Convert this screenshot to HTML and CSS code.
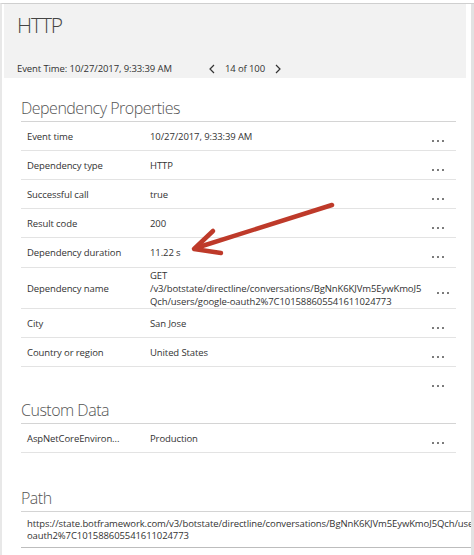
FILE: index.html
```html
<!DOCTYPE html>
<html lang="en">
<head>
    <meta charset="UTF-8">
    <meta name="viewport" content="width=device-width, initial-scale=1.0">
    <title>HTTP - Dependency</title>
    <link rel="stylesheet" href="styles.css">
</head>
<body>
    <div class="panel">
        <header class="blade-head">
            <h1>HTTP</h1>
            <div class="event-bar">
                <span>Event Time: 10/27/2017, 9:33:39 AM</span>
                <span class="pager">
                    <svg width="6" height="10" viewBox="0 0 6 10"><path d="M5 1 L1 5 L5 9" fill="none" stroke="#333" stroke-width="1.2"/></svg>
                    <span class="count">14 of 100</span>
                    <svg width="6" height="10" viewBox="0 0 6 10"><path d="M1 1 L5 5 L1 9" fill="none" stroke="#333" stroke-width="1.2"/></svg>
                </span>
            </div>
        </header>

        <div class="content">
            <section class="props">
                <h2>Dependency Properties</h2>
                <div class="table">
                    <div class="row"><div class="key">Event time</div><div class="val">10/27/2017, 9:33:39 AM</div><div class="more"><svg width="14" height="4" viewBox="0 0 14 4"><circle cx="2" cy="2" r="0.95"/><circle cx="7" cy="2" r="0.95"/><circle cx="12" cy="2" r="0.95"/></svg></div></div>
                    <div class="row"><div class="key">Dependency type</div><div class="val">HTTP</div><div class="more"><svg width="14" height="4" viewBox="0 0 14 4"><circle cx="2" cy="2" r="0.95"/><circle cx="7" cy="2" r="0.95"/><circle cx="12" cy="2" r="0.95"/></svg></div></div>
                    <div class="row"><div class="key">Successful call</div><div class="val">true</div><div class="more"><svg width="14" height="4" viewBox="0 0 14 4"><circle cx="2" cy="2" r="0.95"/><circle cx="7" cy="2" r="0.95"/><circle cx="12" cy="2" r="0.95"/></svg></div></div>
                    <div class="row"><div class="key">Result code</div><div class="val">200</div><div class="more"><svg width="14" height="4" viewBox="0 0 14 4"><circle cx="2" cy="2" r="0.95"/><circle cx="7" cy="2" r="0.95"/><circle cx="12" cy="2" r="0.95"/></svg></div></div>
                    <div class="row tall"><div class="key">Dependency duration</div><div class="val">11.22 s</div><div class="more"><svg width="14" height="4" viewBox="0 0 14 4"><circle cx="2" cy="2" r="0.95"/><circle cx="7" cy="2" r="0.95"/><circle cx="12" cy="2" r="0.95"/></svg></div></div>
                    <div class="row multi"><div class="key">Dependency name</div><div class="val">GET<br>/v3/botstate/directline/conversations/BgNnK6KJVm5EywKmoJ5<br>Qch/users/google-oauth2%7C101588605541611024773</div><div class="more"><svg width="14" height="4" viewBox="0 0 14 4"><circle cx="2" cy="2" r="0.95"/><circle cx="7" cy="2" r="0.95"/><circle cx="12" cy="2" r="0.95"/></svg></div></div>
                    <div class="row"><div class="key">City</div><div class="val">San Jose</div><div class="more"><svg width="14" height="4" viewBox="0 0 14 4"><circle cx="2" cy="2" r="0.95"/><circle cx="7" cy="2" r="0.95"/><circle cx="12" cy="2" r="0.95"/></svg></div></div>
                    <div class="row"><div class="key">Country or region</div><div class="val">United States</div><div class="more"><svg width="14" height="4" viewBox="0 0 14 4"><circle cx="2" cy="2" r="0.95"/><circle cx="7" cy="2" r="0.95"/><circle cx="12" cy="2" r="0.95"/></svg></div></div>
                    <div class="row blank"><div class="key"></div><div class="val"></div><div class="more"><svg width="14" height="4" viewBox="0 0 14 4"><circle cx="2" cy="2" r="0.95"/><circle cx="7" cy="2" r="0.95"/><circle cx="12" cy="2" r="0.95"/></svg></div></div>
                </div>
            </section>

            <section class="custom">
                <h2>Custom Data</h2>
                <div class="table">
                    <div class="row"><div class="key">AspNetCoreEnviron...</div><div class="val">Production</div><div class="more"><svg width="14" height="4" viewBox="0 0 14 4"><circle cx="2" cy="2" r="0.95"/><circle cx="7" cy="2" r="0.95"/><circle cx="12" cy="2" r="0.95"/></svg></div></div>
                </div>
            </section>

            <section class="path">
                <h2>Path</h2>
                <div class="path-text">
                    <div class="line">https://state.botframework.com/v3/botstate/directline/conversations/BgNnK6KJVm5EywKmoJ5Qch/users/google-</div>
                    <div class="line">oauth2%7C101588605541611024773</div>
                </div>
            </section>

            <!-- annotation arrow pointing at the duration -->
            <svg class="arrow" width="474" height="555" viewBox="0 0 474 555">
                <line x1="330" y1="205" x2="197" y2="247" stroke="#be3a2a" stroke-width="4.5" stroke-linecap="round"/>
                <path d="M211 231 L192 249 L219 253" fill="none" stroke="#be3a2a" stroke-width="4.5" stroke-linecap="round" stroke-linejoin="round"/>
            </svg>
        </div>
        <div class="scroll"></div>
    </div>
</body>
</html>
```

FILE: styles.css
```css
* {
    margin: 0;
    padding: 0;
    box-sizing: border-box;
}

body {
    background: #fff;
    color: #333;
    font-family: 'Open Sans', 'Noto Sans', sans-serif;
    font-size: 9.5px;
    letter-spacing: -0.1px;
    width: 474px;
    height: 555px;
    overflow: hidden;
}

.panel {
    position: relative;
    margin-top: 3px;
    height: 552px;
    border-top: 1px solid #cfcfcf;
    border-left: 2px solid #e8e8e8;
    padding-left: 2px;
    padding-right: 8px;
    overflow: hidden;
}

/* Header */
.blade-head {
    background: #f2f2f2;
    height: 74px;
    padding: 6px 0 0 13px;
}

.blade-head h1 {
    font-size: 21px;
    font-weight: 300;
    letter-spacing: -1.1px;
    color: #444;
    line-height: 30px;
}

.event-bar {
    display: flex;
    align-items: center;
    margin-top: 21px;
    line-height: 16px;
    color: #333;
}

.pager {
    display: flex;
    align-items: center;
    margin-left: 37px;
}

.pager .count {
    margin: 0 10px;
}

/* Content */
.content {
    padding: 18px 10px 0 17px;
}

h2 {
    font-size: 16px;
    font-weight: 300;
    letter-spacing: -0.5px;
    color: #555;
    line-height: 24px;
    margin-bottom: 1px;
}

.table {
    border-top: 1px solid #d4d4d4;
}

.row {
    display: grid;
    grid-template-columns: 123px 1fr 40px;
    align-items: center;
    min-height: 29px;
    border-bottom: 1px solid #e3e3e3;
    padding-left: 6px;
}

.row.tall {
    min-height: 30px;
}

.row.multi {
    min-height: 41px;
    line-height: 13px;
}

.row.blank {
    border-bottom: none;
    min-height: 28px;
}

.more {
    display: flex;
    justify-content: flex-end;
    padding: 9px 11px 0 0;
}

.more svg {
    fill: #444;
}

.custom {
    margin-top: 3px;
}

.path {
    margin-top: 33px;
}

.path-text {
    border-top: 1px solid #d4d4d4;
    border-bottom: 1px solid #bdbdbd;
    padding: 6px 0 5px 6px;
    line-height: 12px;
    margin-right: -30px;
}

.path-text .line {
    white-space: nowrap;
    overflow: hidden;
}

.arrow {
    position: absolute;
    left: 0;
    top: -4px;
    pointer-events: none;
}

.scroll {
    position: absolute;
    top: 0;
    right: 0;
    width: 3px;
    height: 100%;
    background: #e2e2e2;
}
```
